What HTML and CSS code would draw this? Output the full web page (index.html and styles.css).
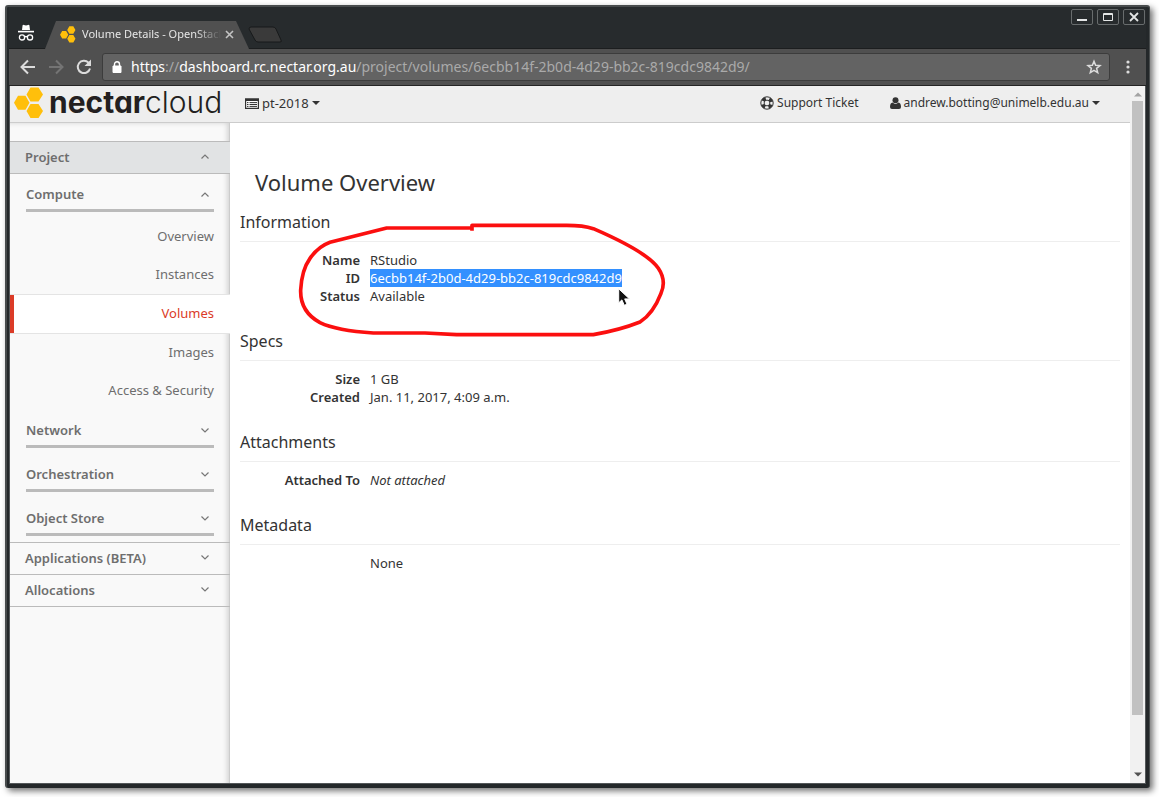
FILE: index.html
```html
<!DOCTYPE html>
<html lang="en">
<head>
    <meta charset="UTF-8">
    <meta name="viewport" content="width=device-width, initial-scale=1.0">
    <title>Volume Details - OpenStack Dashboard</title>
    <link rel="stylesheet" href="styles.css">
</head>
<body>
    <div class="window">
        <div class="titlebar">
            <svg class="incognito" width="18" height="18" viewBox="0 0 18 18" fill="none" stroke="#fff" stroke-width="1.3">
                <path d="M5 6 5.6 1.2Q6 .6 7 1L9 1.4 11 1Q12 .6 12.4 1.2L13 6Z" fill="#fff" stroke="none"/>
                <path d="M1 7.6h16" stroke-width="1.6"/>
                <circle cx="5" cy="13.4" r="2.6"/>
                <circle cx="13" cy="13.4" r="2.6"/>
                <path d="M7.6 13q1.400-1 2.800 0"/>
            </svg>
            <div class="tab">
                <svg width="16" height="17" viewBox="0 0 30 32" fill="#ffbf0b">
                    <path d="M13.500 7.500 17.500 0.500h7.500l4 7-4 7h-7.500zM0 16.500l4-7h7.500l4 7-4 7H4zM13.500 24l4-7h7.500l4 7-4 7h-7.500z"/>
                </svg>
                <span class="tab-title">Volume Details - OpenStack</span>
                <button class="tab-close" aria-label="Close tab">
                    <svg width="9" height="9" viewBox="0 0 9 9" stroke="#c4c4c4" stroke-width="1.6"><path d="M1 1l7 7M8 1 1 8"/></svg>
                </button>
            </div>
            <button class="new-tab" aria-label="New tab">
                <svg width="34" height="18" viewBox="0 0 34 18"><path d="M3 1h22q2 0 3 2l5 11q1 2-1 2H10q-2 0-3-2L1 3Q1 1 3 1z" fill="#3a3a3a" stroke="#17191a"/></svg>
            </button>
            <div class="window-buttons">
                <button aria-label="Minimize"><svg width="12" height="10" viewBox="0 0 12 10"><path d="M1 8h10" stroke="#e4e6e6" stroke-width="2"/></svg></button>
                <button aria-label="Maximize"><svg width="12" height="10" viewBox="0 0 12 10" fill="none" stroke="#e4e6e6"><path d="M1.500 1.500h9v7h-9zM1.500 2.500h9"/></svg></button>
                <button aria-label="Close"><svg width="12" height="10" viewBox="0 0 12 10"><path d="M2 1l8 8M10 1 2 9" stroke="#e4e6e6" stroke-width="1.8"/></svg></button>
            </div>
        </div>

        <div class="toolbar">
            <button aria-label="Back"><svg width="16" height="16" viewBox="0 0 16 16" fill="none" stroke="#dcdcdc" stroke-width="2"><path d="M15 8H2M8 1.500 1.500 8 8 14.500"/></svg></button>
            <button aria-label="Forward" disabled><svg width="16" height="16" viewBox="0 0 16 16" fill="none" stroke="#747474" stroke-width="2"><path d="M1 8h13M8 1.500 14.500 8 8 14.500"/></svg></button>
            <button aria-label="Reload"><svg width="16" height="16" viewBox="0 0 16 16" fill="none" stroke="#dcdcdc" stroke-width="2"><path d="M14 9.500A6.200 6.200 0 1 1 12.500 3.600L14 5"/><path d="M15 .5V7H8.500z" fill="#dcdcdc" stroke="none"/></svg></button>
            <div class="address">
                <svg width="10" height="12" viewBox="0 0 10 12"><path d="M1 5h8v6.500H1z" fill="#fff" stroke="#fff"/><path d="M2.500 5V3.200a2.500 2.500 0 0 1 5 0V5" fill="none" stroke="#fff" stroke-width="1.400"/></svg>
                <div class="url" role="textbox" contenteditable="true" spellcheck="false" aria-label="Address">https<i>://</i>dashboard.rc.nectar.org.au<i>/project/volumes/6ecbb14f-2b0d-4d29-bb2c-819cdc9842d9/</i></div>
                <button class="star" aria-label="Bookmark"><svg width="16" height="16" viewBox="0 0 16 16" fill="none" stroke="#dcdcdc" stroke-width="1.500"><path d="M8 2.200 9.600 6.300 14 6.600 10.600 9.400 11.700 13.700 8 11.300 4.300 13.700 5.400 9.400 2 6.600 6.400 6.300z"/></svg></button>
            </div>
            <button class="menu" aria-label="Menu"><svg width="4" height="14" viewBox="0 0 4 14" fill="#dcdcdc"><circle cx="2" cy="2" r="1.600"/><circle cx="2" cy="7" r="1.600"/><circle cx="2" cy="12" r="1.600"/></svg></button>
        </div>

        <div class="viewport">
            <div class="page">
                <header class="topbar">
                    <a class="brand" href="#">
                        <svg width="30" height="32" viewBox="0 0 30 32" fill="#ffbf0b">
                            <path d="M12.500 7.500 16.500 .5h8l4.500 7-4.500 7h-8zM0 15.800l4-7h7.500l4 7-4 7H4zM12.500 24l4-7h8l4.500 7-4.500 7h-8z"/>
                        </svg>
                        <span class="brand-name"><b>nectar</b>cloud</span>
                    </a>
                    <a class="project-switch" href="#">
                        <svg width="14" height="11" viewBox="0 0 14 11"><path d="M.6 1h12.800v9.400H.6z" fill="#fff" stroke="#333" stroke-width="1.200"/><path d="M0 .5h14V3H0z" fill="#333"/><path d="M2 4.600h1.500M4.500 4.600h7.500M2 6.500h1.500M4.500 6.500h7.500M2 8.400h1.500M4.500 8.400h7.500" stroke="#333"/></svg>
                        pt-2018
                        <span class="caret"></span>
                    </a>
                    <a class="support" href="#">
                        <svg width="14" height="14" viewBox="0 0 14 14" fill="none" stroke="#333"><circle cx="7" cy="7" r="6.200"/><circle cx="7" cy="7" r="2.900"/><circle cx="7" cy="7" r="4.600" stroke-width="3.400" stroke-dasharray="3.600 3.626" stroke-dashoffset="-1.800"/></svg>
                        Support Ticket
                    </a>
                    <a class="user" href="#">
                        <svg width="11" height="12" viewBox="0 0 11 12" fill="#333"><circle cx="5.500" cy="3.200" r="3"/><path d="M2.600 5.600Q5.500 8.200 8.400 5.600 11 6 11 10 11 12 9 12H2Q0 12 0 10 0 6 2.600 5.600z"/></svg>
                        andrew.botting@unimelb.edu.au
                        <span class="caret"></span>
                    </a>
                </header>

                <div class="columns">
                    <nav class="sidebar">
                        <div class="panel active">
                            <a href="#">Project</a>
                            <svg class="chevron" width="8" height="5" viewBox="0 0 8 5"><path d="M.5 4.500 4 1l3.500 3.500"/></svg>
                        </div>
                        <div class="group">
                            <a href="#">Compute</a>
                            <svg class="chevron" width="8" height="5" viewBox="0 0 8 5"><path d="M.5 4.500 4 1l3.500 3.500"/></svg>
                        </div>
                        <ul>
                            <li><a href="#">Overview</a></li>
                            <li><a href="#">Instances</a></li>
                            <li class="current"><a href="#">Volumes</a></li>
                            <li><a href="#">Images</a></li>
                            <li><a href="#">Access &amp; Security</a></li>
                        </ul>
                        <div class="group">
                            <a href="#">Network</a>
                            <svg class="chevron" width="8" height="5" viewBox="0 0 8 5"><path d="M.5 .5 4 4 7.500 .5"/></svg>
                        </div>
                        <div class="group">
                            <a href="#">Orchestration</a>
                            <svg class="chevron" width="8" height="5" viewBox="0 0 8 5"><path d="M.5 .5 4 4 7.500 .5"/></svg>
                        </div>
                        <div class="group">
                            <a href="#">Object Store</a>
                            <svg class="chevron" width="8" height="5" viewBox="0 0 8 5"><path d="M.5 .5 4 4 7.500 .5"/></svg>
                        </div>
                        <div class="panel">
                            <a href="#">Applications (BETA)</a>
                            <svg class="chevron" width="8" height="5" viewBox="0 0 8 5"><path d="M.5 .5 4 4 7.500 .5"/></svg>
                        </div>
                        <div class="panel last">
                            <a href="#">Allocations</a>
                            <svg class="chevron" width="8" height="5" viewBox="0 0 8 5"><path d="M.5 .5 4 4 7.500 .5"/></svg>
                        </div>
                    </nav>

                    <main>
                        <h1>Volume Overview</h1>

                        <h2>Information</h2>
                        <dl>
                            <dt>Name</dt>
                            <dd>RStudio</dd>
                            <dt>ID</dt>
                            <dd><span class="selected">6ecbb14f-2b0d-4d29-bb2c-819cdc9842d9</span></dd>
                            <dt>Status</dt>
                            <dd>Available</dd>
                        </dl>

                        <h2>Specs</h2>
                        <dl>
                            <dt>Size</dt>
                            <dd>1 GB</dd>
                            <dt>Created</dt>
                            <dd>Jan. 11, 2017, 4:09 a.m.</dd>
                        </dl>

                        <h2>Attachments</h2>
                        <dl>
                            <dt>Attached To</dt>
                            <dd><em>Not attached</em></dd>
                        </dl>

                        <h2>Metadata</h2>
                        <dl>
                            <dd>None</dd>
                        </dl>

                        <!-- Hand-drawn ring around the volume details -->
                        <svg class="ring" width="375" height="120" viewBox="195 210 1125 360" fill="none" stroke="#fb0f0f" stroke-width="11" stroke-linejoin="round">
                            <path d="M726 242V226H1010Q1060 226 1090 236C1150 262 1255 310 1285 355Q1310 392 1293 430 1270 490 1230 516 1170 540 1090 554H680L585 549H430Q320 542 270 518 210 485 212 420 215 360 240 325 265 290 300 277L470 234H726"/>
                        </svg>
                        <svg class="pointer" width="13" height="19" viewBox="0 0 13 19"><path d="M.7 .8V14.800L3.900 11.900 6.300 17.300 9 16.200 6.700 10.900H11.500z" fill="#111" stroke="#fff"/></svg>
                    </main>
                </div>
            </div>

            <div class="scrollbar">
                <svg width="8" height="5" viewBox="0 0 8 5"><path d="M0 4.500 4 .5l4 4z" fill="#a3a3a3"/></svg>
                <div class="track"><div class="thumb"></div></div>
                <svg width="8" height="5" viewBox="0 0 8 5"><path d="M0 .5h8l-4 4z" fill="#505050"/></svg>
            </div>
        </div>
    </div>
</body>
</html>
```
FILE: styles.css
```css
* {
    box-sizing: border-box;
}
body {
    margin: 0;
    background: #fff;
    color: #333;
    font-family: "Noto Sans", sans-serif;
    font-size: 13px;
    line-height: 18px;
}
a {
    color: inherit;
    text-decoration: none;
}
button {
    display: flex;
    align-items: center;
    justify-content: center;
    padding: 0;
    border: none;
    background: none;
}
svg {
    flex: none;
}

/* Browser window */
.window {
    display: flex;
    flex-direction: column;
    height: calc(100vh - 14px);
    margin: 5px 9px 9px 5px;
    padding: 0 3px 4px 2px;
    border: solid #484c4d;
    border-width: 2px 1px 0 2px;
    border-radius: 3px;
    background: #24282a;
    box-shadow: 3px 3px 6px rgba(0, 0, 0, 0.55);
}
.titlebar {
    display: flex;
    align-items: flex-end;
    height: 42px;
    background: #272b2d;
    border-bottom: 1px solid #1c1e1f;
}
.incognito {
    margin: 0 10px 6px 8px;
}
.tab {
    display: flex;
    align-items: center;
    width: 204px;
    height: 28px;
    padding: 0 18px 2px 15px;
    background: #505050;
    clip-path: polygon(11px 0, 191px 0, 204px 100%, 0 100%);
    margin-bottom: -1px;
}
.tab-title {
    flex: 1;
    margin: 0 1px 0 6px;
    white-space: nowrap;
    color: #e6e6e6;
    font-size: 11px;
    mask-image: linear-gradient(to right, #000 80%, transparent 98%);
}
.new-tab {
    margin: 0 0 4px -1px;
}
.window-buttons {
    display: flex;
    gap: 4px;
    align-self: flex-start;
    margin: 2px 1px 0 auto;
}
.window-buttons button {
    width: 22px;
    height: 16px;
    border: 1px solid #686c6d;
    border-radius: 2px;
}
.toolbar {
    display: flex;
    align-items: center;
    gap: 12px;
    height: 37px;
    padding: 0 16px 0 11px;
    background: #505050;
    border-bottom: 1px solid #242424;
}
.address {
    display: flex;
    flex: 1;
    align-items: center;
    height: 28px;
    margin-right: 4px;
    margin-left: -2px;
    padding: 0 7px 0 9px;
    background: #636363;
    border: 1px solid #3c3c3c;
    border-radius: 3px;
}
.url {
    flex: 1;
    margin-left: 9px;
    color: #fff;
    font-size: 14px;
    white-space: nowrap;
    overflow: hidden;
}
.url i {
    color: #aaa;
    font-style: normal;
}
.viewport {
    display: flex;
    flex: 1;
    min-height: 0;
    background: #fff;
    border: solid #54585a;
    border-width: 0 1px 1px;
}
.page {
    display: flex;
    flex: 1;
    flex-direction: column;
}
.scrollbar {
    display: flex;
    flex-direction: column;
    align-items: center;
    width: 15px;
    padding: 6px 0;
    background: #f1f1f1;
}
.track {
    flex: 1;
    margin: 4px 0;
}
.thumb {
    width: 11px;
    height: 92%;
    background: #c1c1c1;
}

/* Dashboard header */
.topbar {
    display: flex;
    align-items: center;
    height: 37px;
    padding: 0 30px 2px 4px;
    background: #eee;
    border-bottom: 1px solid #ccc;
}
.topbar a {
    display: flex;
    align-items: center;
    gap: 3px;
}
.topbar .brand {
    gap: 5px;
    width: 231px;
}
.brand-name {
    color: #231f20;
    font-family: Inter, sans-serif;
    font-size: 30px;
    font-weight: 300;
    font-feature-settings: "cv11";
    line-height: 32px;
    padding-bottom: 3px;
}
.brand-name b {
    font-weight: 700;
}
.support,
.user {
    font-size: 12px;
}
.support {
    margin: 0 31px 0 auto;
}
.caret {
    border: 4px solid transparent;
    border-top-color: #333;
    border-bottom: none;
}

/* Sidebar */
.columns {
    display: flex;
    flex: 1;
    min-height: 0;
}
.sidebar {
    width: 220px;
    padding-top: 18px;
    color: #6e6e6e;
    background: #f9f9f9;
    border-right: 1px solid #ccc;
    box-shadow: inset -5px 3px 5px -3px rgba(0, 0, 0, 0.15);
}
.panel,
.group {
    display: flex;
    align-items: center;
    justify-content: space-between;
    font-weight: 600;
}
.panel {
    height: 32px;
    margin-right: -1px;
    padding: 0 21px 2px 15px;
    border-top: 1px solid #bbb;
}
.panel.active {
    height: 33px;
    background: #e1e3e4;
    border-bottom: 1px solid #bbb;
}
.panel.last {
    height: 33px;
    border-bottom: 1px solid #bbb;
}
.group {
    margin: 0 15px 6px 16px;
    padding: 11px 5px 6px 0;
    border-bottom: 3px solid #bbb;
}
.chevron {
    fill: none;
    stroke: #777;
    stroke-width: 1.2;
}
.sidebar ul {
    margin: 0;
    padding: 0;
    list-style: none;
}
.sidebar li {
    padding: 9px 15px 11px;
    text-align: right;
}
.sidebar .current {
    margin-right: -1px;
    padding-right: 16px;
    color: #db3b27;
    background: #fff;
    border: solid #e4e4e4;
    border-width: 1px 0;
    box-shadow: inset 4px 0 #db3b27;
}

/* Volume details */
main {
    position: relative;
    flex: 1;
    padding: 44px 10px 0;
}
h1 {
    margin: 0 15px 14px;
    font-size: 22px;
    font-weight: 400;
    line-height: 30px;
}
h2 {
    margin: 0 0 9px;
    padding-bottom: 8px;
    border-bottom: 1px solid #eee;
    font-size: 16px;
    font-weight: 400;
    line-height: 22px;
}
dl {
    display: grid;
    grid-template-columns: 120px 1fr;
    column-gap: 10px;
    margin: 0 0 25px;
}
dt {
    font-weight: 600;
    text-align: right;
}
dd {
    grid-column: 2;
    margin: 0;
}
.selected {
    color: #fff;
    background: #3390ff;
}
.ring {
    position: absolute;
    top: 97px;
    left: 65px;
}
.pointer {
    position: absolute;
    top: 165px;
    left: 388px;
}
```
